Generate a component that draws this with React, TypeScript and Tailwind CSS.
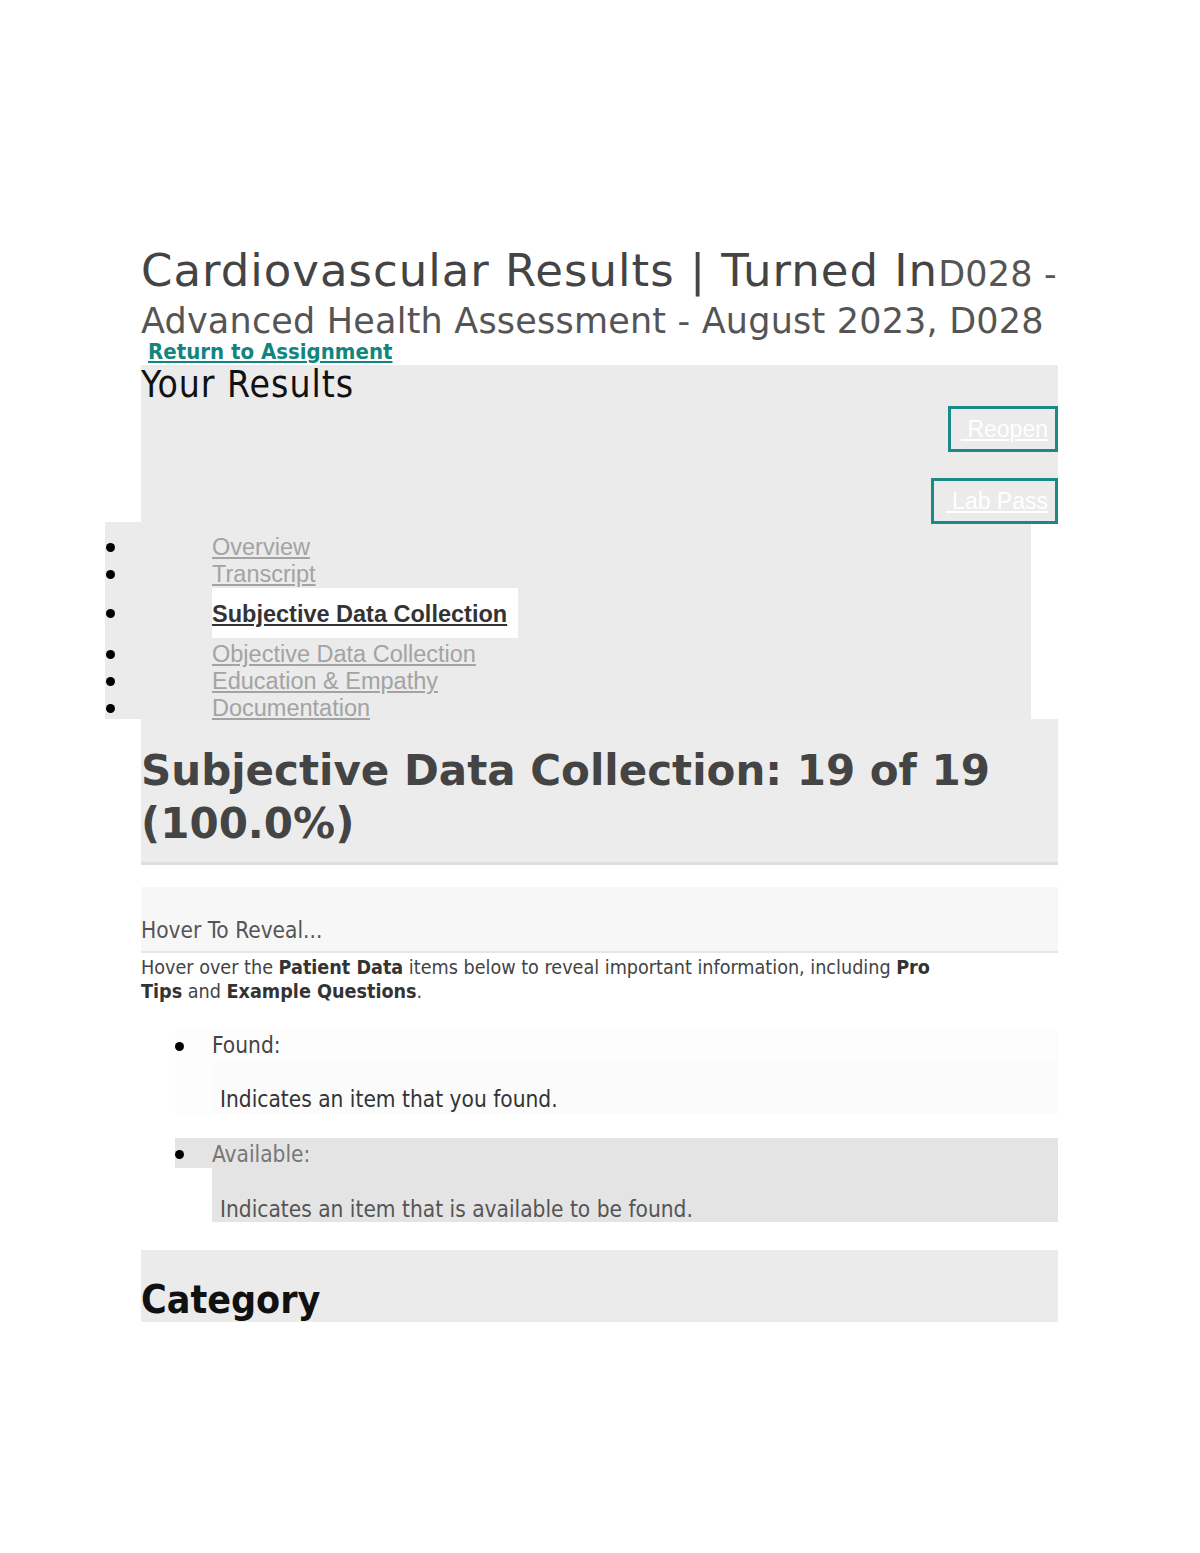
import React from 'react';

const navItems = [
  { label: 'Overview', active: false },
  { label: 'Transcript', active: false },
  { label: 'Subjective Data Collection', active: true },
  { label: 'Objective Data Collection', active: false },
  { label: 'Education & Empathy', active: false },
  { label: 'Documentation', active: false },
];

const dejavu = "font-['DejaVu_Sans',sans-serif]";
const condensed = "font-['DejaVu_Sans_Condensed','DejaVu_Sans',sans-serif]";
const narrow = "font-['Liberation_Sans_Narrow','DejaVu_Sans_Condensed',sans-serif]";
const arial = "font-['Liberation_Sans',Arial,sans-serif]";

function Dot({ className = '' }: { className?: string }) {
  return <span className={`inline-block w-[9px] h-[9px] rounded-full bg-black shrink-0 ${className}`} />;
}

export default function App() {
  return (
    <div className="min-h-[1553px] bg-white pt-[249px] pb-[200px]">
      <div className="ml-[141px] w-[917px]">
        {/* page title */}
        <h1 className={`${dejavu} text-[45px] leading-[44px] tracking-[1px] text-[#444] whitespace-nowrap`}>
          Cardiovascular Results | Turned In
          <span className="text-[35px] tracking-[0.2px] text-[#555]">
            D028 -<br />Advanced Health Assessment - August 2023, D028
          </span>
        </h1>
        <a href="#" className={`${condensed} block ml-[7px] -mt-[4px] text-[22px] leading-[26px] font-bold text-[#118580] underline`}>
          Return to Assignment
        </a>

        {/* results header */}
        <div className="bg-[#ebebeb] h-[157px] flex flex-col">
          <h2 className={`${condensed} text-[37px] leading-[40px] tracking-[1px] text-[#111]`}>Your Results</h2>
          <div className="flex flex-col items-end mt-[1px]">
            <a href="#" className={`${arial} flex items-center h-[46px] pl-[10px] pr-[7px] border-[3px] border-[#1b8a86] text-[23px] text-white underline`}>
              &nbsp;Reopen
            </a>
            <a href="#" className={`${arial} flex items-center h-[46px] pl-[12px] pr-[7px] mt-[26px] border-[3px] border-[#1b8a86] text-[23px] text-white underline`}>
              &nbsp;Lab Pass
            </a>
          </div>
        </div>
      </div>

      {/* section nav */}
      <ul className={`${arial} ml-[105px] w-[926px] h-[197px] bg-[#ebebeb] pt-[12px]`}>
        {navItems.map(item => (
          <li
            key={item.label}
            className={`flex items-center ${item.active ? 'h-[50px] mb-[3px]' : 'h-[27px]'}`}
          >
            <Dot className="ml-[1px]" />
            {item.active ? (
              <span className="ml-[97px] h-[50px] pr-[11px] pt-[3px] bg-white flex items-center">
                <a href="#" className="text-[23.5px] font-bold text-[#333] underline">{item.label}</a>
              </span>
            ) : (
              <a href="#" className="ml-[97px] text-[23.5px] text-[#a3a3a3] underline">{item.label}</a>
            )}
          </li>
        ))}
      </ul>

      <div className="ml-[141px] w-[917px]">
        {/* score heading */}
        <div className="bg-[#ececec] border-b-[3px] border-[#dedede] pt-[25px] pb-[12px]">
          <h2 className={`${dejavu} text-[42px] leading-[53px] font-bold text-[#444]`}>
            Subjective Data Collection: 19 of 19<br />(100.0%)
          </h2>
        </div>

        {/* legend */}
        <div className="mt-[22px] h-[66px] bg-[#f7f7f7] border-b-[2px] border-[#e6e6e6] flex items-end pb-[8px]">
          <p className={`${narrow} text-[22.5px] leading-[26px] text-[#555]`}>Hover To Reveal...</p>
        </div>
        <p className={`${narrow} mt-[3px] text-[19.6px] leading-[24px] text-[#444]`}>
          Hover over the <b className="text-[#333]">Patient Data</b> items below to reveal important information, including <b className="text-[#333]">Pro</b>
          <br />
          <b className="text-[#333]">Tips</b> and <b className="text-[#333]">Example Questions</b>.
        </p>

        <ul className={`${narrow} mt-[26px] ml-[34px]`}>
          <li className="bg-[#fdfdfd]">
            <div className="flex items-center h-[30px] pt-[2px]">
              <Dot />
              <span className="ml-[28px] text-[22.5px] text-[#444]">Found:</span>
            </div>
            <div className="ml-[37px] h-[55px] bg-[#fbfbfb] flex items-end pb-[6px]">
              <span className="ml-[8px] text-[22.5px] leading-[20px] text-[#333]">Indicates an item that you found.</span>
            </div>
          </li>
          <li className="mt-[23px]">
            <div className="flex items-center h-[30px] pt-[3px] bg-[#e4e4e4]">
              <Dot />
              <span className="ml-[28px] text-[22.5px] text-[#777]">Available:</span>
            </div>
            <div className="ml-[37px] h-[54px] bg-[#e4e4e4] flex items-end pb-[3px]">
              <span className="ml-[8px] text-[22.5px] leading-[20px] text-[#555]">Indicates an item that is available to be found.</span>
            </div>
          </li>
        </ul>

        {/* category */}
        <div className="mt-[28px] h-[72px] bg-[#ebebeb] flex items-end">
          <h2 className={`${condensed} text-[39px] leading-[44px] font-bold text-[#111]`}>Category</h2>
        </div>
      </div>
    </div>
  );
}
